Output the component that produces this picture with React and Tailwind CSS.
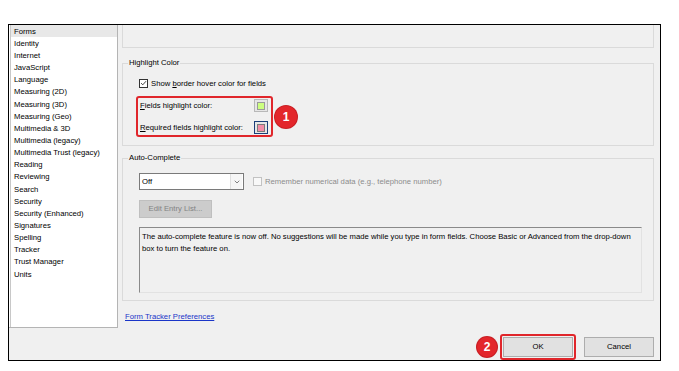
import { ChevronDown } from 'lucide-react'

const categories = [
  'Forms',
  'Identity',
  'Internet',
  'JavaScript',
  'Language',
  'Measuring (2D)',
  'Measuring (3D)',
  'Measuring (Geo)',
  'Multimedia & 3D',
  'Multimedia (legacy)',
  'Multimedia Trust (legacy)',
  'Reading',
  'Reviewing',
  'Search',
  'Security',
  'Security (Enhanced)',
  'Signatures',
  'Spelling',
  'Tracker',
  'Trust Manager',
  'Units',
]

function Badge({ n, size }) {
  return (
    <div
      className={`${size} rounded-full bg-[#e3262b] text-white font-bold flex items-center justify-center text-[12px] shadow-[0_0_0_1px_#c81e23] font-['Liberation_Sans',sans-serif]`}
    >
      {n}
    </div>
  )
}

function Group({ title, className, children }) {
  return (
    <fieldset className={`border border-[#dadada] mx-0 px-0 pb-0 pt-0 ${className}`}>
      <legend className="ml-[5px] px-[1px] leading-[10px]">{title}</legend>
      {children}
    </fieldset>
  )
}

export default function App() {
  return (
    <div className="w-[679px] h-[371px] bg-white pt-[24px] pl-[8px] font-['Liberation_Sans',sans-serif] text-[7.7px] text-black leading-none whitespace-nowrap">
      <div className="w-[653px] h-[337px] border border-black bg-[#f0f0f0] flex">
        {/* category list */}
        <div className="w-[109px] h-[303px] bg-white border-r border-b border-[#b4b4b4] pl-[1px]">
          <div className="h-full border-l border-[#c8c8c8]">
            {categories.map((c, i) => (
              <div
                key={c}
                className={`h-[12.15px] flex items-center pl-[3px] pt-[1px] ${i === 0 ? 'bg-[#e8e8e8]' : ''}`}
              >
                {c}
              </div>
            ))}
          </div>
        </div>

        {/* settings pane */}
        <div className="flex-1 flex flex-col pl-[4px] pr-[6px]">
          <div className="h-[23px] border-x border-b border-[#dadada] shrink-0" />

          <Group title="Highlight Color" className="mt-[10px] h-[88px]">
            <div className="pl-[16px] pt-[10px] flex flex-col">
              <div className="flex items-center gap-[3px] h-[10px]">
                <div className="w-[9px] h-[9px] border border-[#333] bg-white flex items-center justify-center">
                  <svg viewBox="0 0 10 10" className="w-[8px] h-[8px]">
                    <path d="M1.5 5.2 L4 7.6 L8.6 2.4" fill="none" stroke="#222" strokeWidth="1.2" />
                  </svg>
                </div>
                <span className="pt-[1px]">
                  Show <u>b</u>order hover color for fields
                </span>
              </div>
              <div className="flex items-center mt-[8px] -ml-[3px]">
                <div className="w-[137px] h-[41px] border-2 border-[#e0262b] rounded-[3px] flex flex-col justify-center gap-[9px] pl-[2px] pr-[3px]">
                  <div className="flex items-center justify-between">
                    <span className="pt-[1px]">
                      <u>F</u>ields highlight color:
                    </span>
                    <div className="w-[14px] h-[13px] border border-[#b8b8b8] bg-[#e6e6e6] flex items-center justify-center">
                      <div className="w-[8px] h-[8px] bg-[#ccff80] border border-[#9a9a9a]" />
                    </div>
                  </div>
                  <div className="flex items-center justify-between">
                    <span className="pt-[1px]">
                      <u>R</u>equired fields highlight color:
                    </span>
                    <div className="w-[14px] h-[13px] border border-[#1b3f7a] bg-[#e6e6e6] flex items-center justify-center">
                      <div className="w-[8px] h-[8px] bg-[#f28da8] border border-[#7a7a7a]" />
                    </div>
                  </div>
                </div>
                <div className="ml-[2px]">
                  <Badge n="1" size="w-[22px] h-[22px]" />
                </div>
              </div>
            </div>
          </Group>

          <Group title="Auto-Complete" className="mt-[7px] h-[148px]">
            <div className="pl-[16px] pt-[10px] pr-[11px] flex flex-col">
              <div className="flex items-center">
                <div className="w-[105px] h-[17px] bg-white border border-[#7a7a7a] flex items-center justify-between pl-[2px]">
                  <span className="pt-[1px]">Off</span>
                  <div className="w-[12px] h-[15px] mr-[1px] border-l border-[#e0e0e0] bg-[#f6f6f6] flex items-center justify-center">
                    <ChevronDown size={8} strokeWidth={2} color="#444" />
                  </div>
                </div>
                <div className="ml-[9px] w-[9px] h-[9px] border border-[#c2c2c2] bg-[#f8f8f8]" />
                <span className="ml-[3px] pt-[1px] text-[#8c8c8c]">Remember numerical data (e.g., telephone number)</span>
              </div>
              <div className="mt-[10px] w-[73px] h-[18px] bg-[#cccccc] border border-[#bfbfbf] text-[#838383] flex items-center justify-center">
                Edit Entry List...
              </div>
              <div className="mt-[9px] h-[66px] border-t border-l border-[#8a8a8a] border-r border-r-[#e2e2e2] border-b border-b-[#e2e2e2] px-[2px] pt-[3px] leading-[12px] whitespace-normal">
                The auto-complete feature is now off. No suggestions will be made while you type in form fields. Choose Basic or Advanced from the drop-down box to turn the feature on.
              </div>
            </div>
          </Group>

          <div className="mt-[11px] pl-[3px] h-[10px] flex items-center">
            <span className="text-[#1a35c8] underline">Form Tracker Preferences</span>
          </div>

          <div className="mt-[12px] flex items-center justify-end">
            <Badge n="2" size="w-[20px] h-[20px]" />
            <div className="ml-[3px] border-2 border-[#e0262b] rounded-[3px] p-[1px]">
              <div className="w-[70px] h-[20px] bg-[#e1e1e1] border border-[#adadad] flex items-center justify-center">
                OK
              </div>
            </div>
            <div className="ml-[8px] w-[70px] h-[20px] bg-[#e1e1e1] border border-[#adadad] flex items-center justify-center">
              Cancel
            </div>
          </div>
        </div>
      </div>
    </div>
  )
}
